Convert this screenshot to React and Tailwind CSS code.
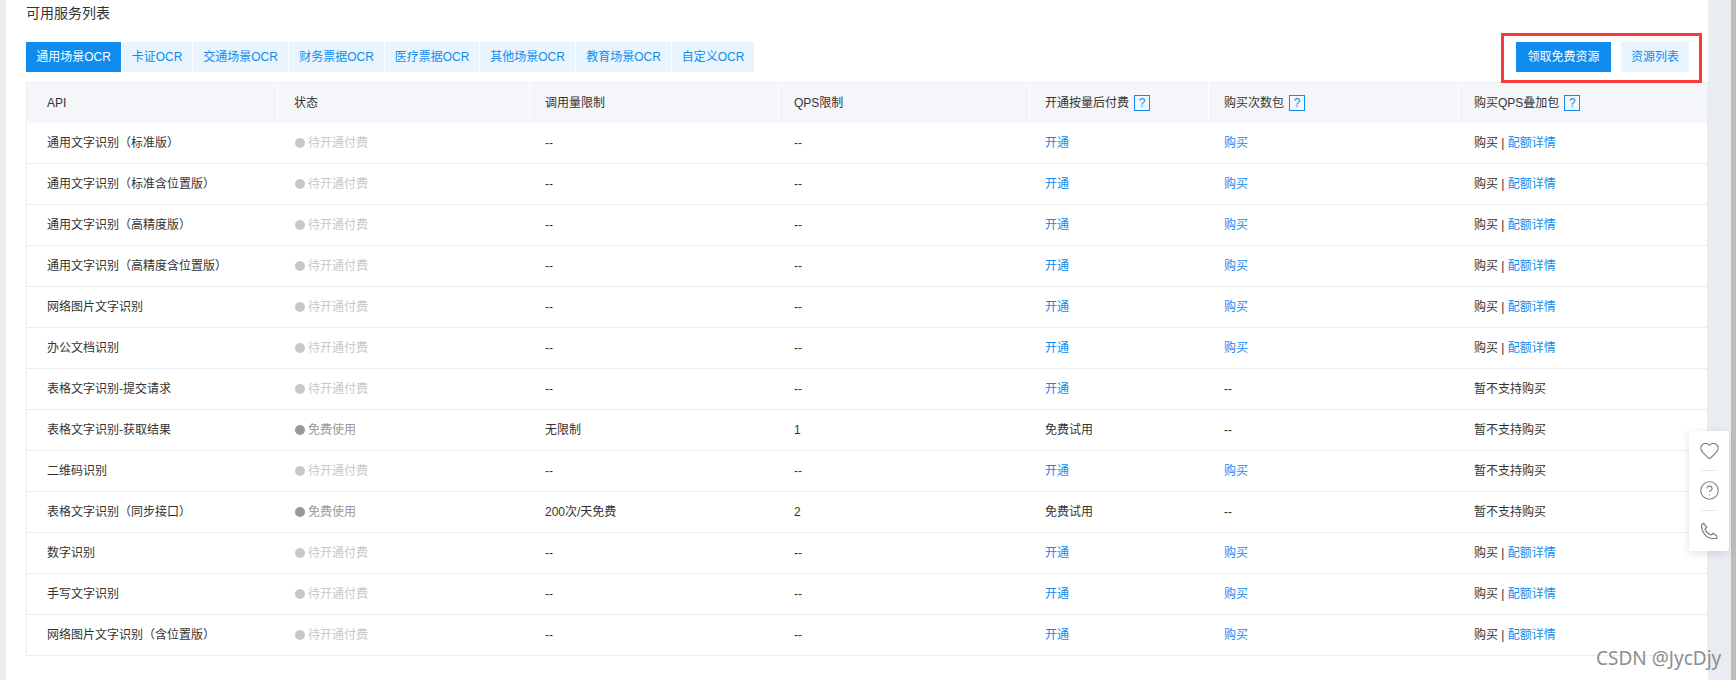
import { Heart, CircleHelp } from "lucide-react";

const tabs = [
  ["通用场景OCR", "w-[95px]"],
  ["卡证OCR", "w-[70px]"],
  ["交通场景OCR", "w-[95px]"],
  ["财务票据OCR", "w-[95px]"],
  ["医疗票据OCR", "w-[94px]"],
  ["其他场景OCR", "w-[95px]"],
  ["教育场景OCR", "w-[95px]"],
  ["自定义OCR", "w-[82px]"],
];

const cols = "grid grid-cols-[250px_252px_249px_251px_179px_250px_249px]";

const pending = { status: "待开通付费", limit: "--", qps: "--", open: "开通", count: "购买", pack: "buy" };
const free = { status: "免费使用", open: "免费试用", count: "--", pack: "no" };

const rows = [
  { name: "通用文字识别（标准版）", ...pending },
  { name: "通用文字识别（标准含位置版）", ...pending },
  { name: "通用文字识别（高精度版）", ...pending },
  { name: "通用文字识别（高精度含位置版）", ...pending },
  { name: "网络图片文字识别", ...pending },
  { name: "办公文档识别", ...pending },
  { name: "表格文字识别-提交请求", ...pending, count: "--", pack: "no" },
  { name: "表格文字识别-获取结果", ...free, limit: "无限制", qps: "1" },
  { name: "二维码识别", ...pending, pack: "no" },
  { name: "表格文字识别（同步接口）", ...free, limit: "200次/天免费", qps: "2" },
  { name: "数字识别", ...pending },
  { name: "手写文字识别", ...pending },
  { name: "网络图片文字识别（含位置版）", ...pending },
];

function Hint() {
  return (
    <span className="ml-[5px] flex h-[16px] w-[16px] items-center justify-center border border-[#108cee] text-[12px] text-[#108cee]">
      ?
    </span>
  );
}

function HeadCell({ children, pad }) {
  return <div className={`flex items-center border-l border-white ${pad}`}>{children}</div>;
}

function Link({ children }) {
  return <span className="text-[#108cee]">{children}</span>;
}

function PhoneIcon() {
  return (
    <svg width="18" height="18" viewBox="0 0 18 18" fill="none" stroke="currentColor" strokeWidth="1.2" strokeLinejoin="round">
      <path d="M1.5 3 L3.5 1.2 L6.8 5.2 L5 7 C6 10 8.5 12.2 11.5 13 L13 11.2 L16.8 14 V16.5 H12 C6 16 1.5 10 1.5 3 Z" />
    </svg>
  );
}

function Row({ row }) {
  const isFree = row.status === "免费使用";
  return (
    <div className={`${cols} h-[41px] items-center border-b border-[#ebedf5] text-[#333]`}>
      <div className="pl-[20px]">{row.name}</div>
      <div className={`flex items-center gap-[3px] pl-[18px] ${isFree ? "text-[#999]" : "text-[#c8c8c8]"}`}>
        <span className={`h-[10px] w-[10px] rounded-full ${isFree ? "bg-[#999]" : "bg-[#c8c8c8]"}`} />
        {row.status}
      </div>
      <div className="pl-[16px]">{row.limit}</div>
      <div className="pl-[16px]">{row.qps}</div>
      <div className="pl-[16px]">{row.open === "开通" ? <Link>开通</Link> : row.open}</div>
      <div className="pl-[16px]">{row.count === "购买" ? <Link>购买</Link> : row.count}</div>
      <div className="pl-[16px]">
        {row.pack === "buy" ? (
          <>
            购买 | <Link>配额详情</Link>
          </>
        ) : (
          "暂不支持购买"
        )}
      </div>
    </div>
  );
}

export default function App() {
  return (
    <div className="relative flex h-[680px] w-[1736px] overflow-hidden bg-[#e9ecf1] font-['Liberation_Sans','Noto_Sans_CJK_SC',sans-serif] text-[12px]">
      <div className="ml-[6px] h-full w-[1702px] bg-white pl-[20px]">
        <h2 className="h-[42px] pt-[3px] text-[14px] leading-[20px] text-[#333]">可用服务列表</h2>

        <div className="flex h-[30px] items-center justify-between pr-[19px]">
          <div className="flex gap-px">
            {tabs.map(([label, width], i) => (
              <div
                key={label}
                className={`flex h-[30px] items-center justify-center ${width} ${
                  i === 0 ? "bg-[#108cee] text-white" : "bg-[#e8f5fe] text-[#108cee]"
                }`}
              >
                {label}
              </div>
            ))}
          </div>
          <div className="flex gap-[10px]">
            <div className="flex h-[30px] w-[95px] items-center justify-center bg-[#108cee] text-white">领取免费资源</div>
            <div className="flex h-[30px] w-[68px] items-center justify-center bg-[#e8f5fe] text-[#108cee]">资源列表</div>
          </div>
        </div>

        <div className="mt-[10px] w-[1682px] border-x border-t border-[#ebedf5]">
          <div className={`${cols} h-[40px] bg-[#f5f6fa] text-[#333]`}>
            <div className="flex items-center pl-[20px]">API</div>
            <HeadCell pad="pl-[16px]">状态</HeadCell>
            <HeadCell pad="pl-[15px]">调用量限制</HeadCell>
            <HeadCell pad="pl-[15px]">QPS限制</HeadCell>
            <HeadCell pad="pl-[15px]">开通按量后付费<Hint /></HeadCell>
            <HeadCell pad="pl-[15px]">购买次数包<Hint /></HeadCell>
            <HeadCell pad="pl-[15px]">购买QPS叠加包<Hint /></HeadCell>
          </div>
          {rows.map((row) => (
            <Row key={row.name} row={row} />
          ))}
        </div>
      </div>

      <div className="ml-auto h-full w-[5px] bg-[#bdbdbd]" />

      <div className="absolute left-[1501px] top-[33px] h-[50px] w-[201px] border-[3px] border-[#f93a3a]" />

      <div className="absolute left-[1689px] top-[431px] flex h-[120px] w-[40px] flex-col items-center rounded-[2px] bg-white text-[#7d8087] shadow-[0_2px_8px_rgba(0,0,0,0.12)]">
        <div className="flex h-[40px] w-[16px] items-center justify-center border-b border-[#e8e8e8]">
          <Heart size={21} strokeWidth={1.3} className="shrink-0" />
        </div>
        <div className="flex h-[40px] w-[16px] items-center justify-center border-b border-[#e8e8e8]">
          <CircleHelp size={21} strokeWidth={1.3} className="shrink-0" />
        </div>
        <div className="flex h-[40px] items-center justify-center">
          <PhoneIcon />
        </div>
      </div>

      <div className="absolute left-[1596px] top-[646px] font-['Noto_Sans',sans-serif] text-[19px] leading-[24px] text-[#8e8e8e]">
        CSDN @JycDjy
      </div>
    </div>
  );
}
